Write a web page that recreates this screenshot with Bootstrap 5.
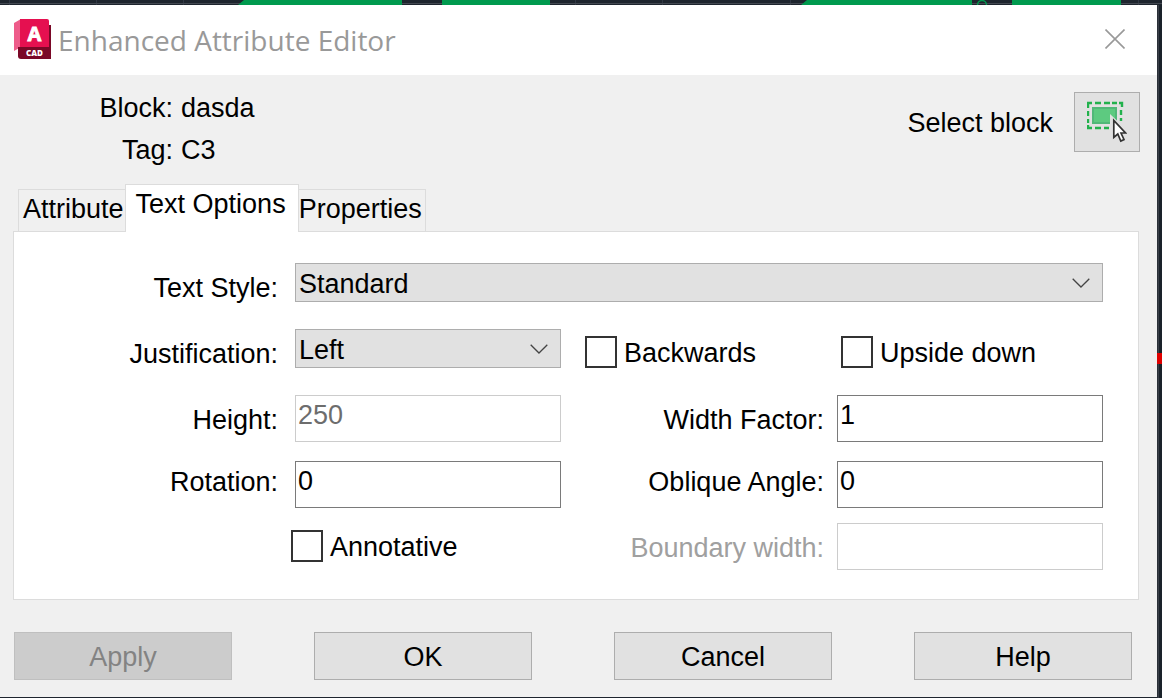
<!DOCTYPE html>
<html lang="en">
<head>
<meta charset="utf-8">
<meta name="viewport" content="width=device-width, initial-scale=1">
<title>Enhanced Attribute Editor</title>
<link href="https://cdn.jsdelivr.net/npm/bootstrap@5.3.0/dist/css/bootstrap.min.css" rel="stylesheet">
<style>
  body { font-family: "Liberation Sans", Arial, sans-serif; font-size: 27px; line-height: 32px; color: #000; background: #1e252e; }
  .canvas-strip { height: 5px; }
  .canvas-edge { flex: none; width: 5px; background: linear-gradient(#e00000, #e00000) 0 51%/100% 11px no-repeat, linear-gradient(90deg, #2a3038 0 1px, #3a3f48 1px 2px, #1a222a 2px); }
  .editor { min-width: 0; background: #f0f0f0; margin-bottom: 1px; }
  .title-row { height: 70px; padding: 0 32px 2px 14px; background: #fff; }
  .title-text { font: 400 28px/40px "Open Sans", "Noto Sans", sans-serif; color: #999; margin: 0 0 0 6px; padding-top: 2px; }
  .plain-btn { border: 0; background: none; padding: 0; line-height: 0; }
  .info-row { padding: 12px 17px 13px 14px; }
  .info-list { display: grid; grid-template-columns: 159px auto; column-gap: 8px; line-height: 42px; margin: 0; }
  .info-list dt, .info-list dd { font-weight: 400; margin: 0; }
  .pick { column-gap: 21px; padding-top: 5px; }
  .pick label { padding-top: 2px; }
  .btn-win { --bs-btn-font-size: 27px; --bs-btn-line-height: 32px; --bs-btn-padding-x: 0; --bs-btn-border-radius: 0; --bs-btn-color: #000; --bs-btn-bg: #e1e1e1; --bs-btn-border-color: #adadad; --bs-btn-hover-bg: #e5f1fb; --bs-btn-hover-border-color: #0078d7; --bs-btn-disabled-color: #838383; --bs-btn-disabled-bg: #ccc; --bs-btn-disabled-border-color: #bfbfbf; --bs-btn-disabled-opacity: 1; }
  .pick-btn { width: 66px; height: 60px; line-height: 0; }
  .editor-tabs { --bs-nav-tabs-border-width: 0; padding-left: 18px; position: relative; z-index: 1; }
  .editor-tabs .nav-link { display: flex; align-items: flex-start; height: 43px; padding: 3px 1px 0 4px; border: 1px solid #dcdcdc; border-radius: 0; color: #000; background: #f0f0f0; margin: 0; }
  .editor-tabs .nav-item:last-child .nav-link { padding: 3px 3px 0 0; border-left: 0; }
  .editor-tabs .nav-link.active { height: 48px; padding: 3px 12px 0 10px; border-color: #dcdcdc; border-bottom: 0; background: #fff; color: #000; margin-left: -1px; }
  .sheet { margin: -1px 18px 0 13px; padding: 31px 35px 29px 0; background: #fff; border: 1px solid #dcdcdc; }
  .sheet-grid { display: grid; grid-template-columns: 281fr 266fr 276fr 266fr; grid-template-rows: 66px 66px 66px 62px auto; align-items: start; }
  .fld-label { text-align: right; padding: 9px 17px 0 0; }
  .fld-label.second { padding-right: 13px; }
  .fld-label.high { padding-top: 5px; }
  .fld-label.off { color: #a0a0a0; }
  .span-rest { grid-column: 2 / -1; }
  .fld { height: 47px; padding: 4px 2px 10px; border: 1px solid #7a7a7a; border-radius: 0; font-size: 27px; line-height: 32px; color: #000; background: #fff; }
  .fld:disabled { border-color: #ccc; background: #fff; color: #6d6d6d; opacity: 1; }
  .drop { height: 39px; padding: 4px 36px 1px 3px; border: 1px solid #adadad; border-radius: 0; font-size: 27px; line-height: 32px; color: #000; background-color: #e1e1e1; background-size: 18px 10px; background-position: right 12px center;
    background-image: url("data:image/svg+xml,%3csvg xmlns='http://www.w3.org/2000/svg' viewBox='0 0 18 10'%3e%3cpath d='M.7.7 9 9 17.3.7' fill='none' stroke='%23444' stroke-width='1.3'/%3e%3c/svg%3e"); }
  .tick { display: flex; align-items: center; column-gap: 7px; padding-top: 6px; }
  .tick .form-check-input { flex: none; width: 32px; height: 32px; margin: 0; border: 2px solid #333; border-radius: 0; }
  .tick label { padding-top: 2px; }
  .tick-b { padding-left: 24px; }
  .tick-u { padding-left: 4px; }
  .tick-a { margin-left: -4px; }
  .actions { padding: 32px 25px 17px 14px; }
  .actions .btn { width: 218px; padding-top: 8px; padding-bottom: 6px; }
</style>
</head>
<body>
<svg class="canvas-strip d-block w-100" viewBox="0 0 1162 5" preserveAspectRatio="none" aria-hidden="true">
  <path d="M9.500 0v5M96.500 0v5M183.500 0v5M575.500 0v5M662.500 0v5M790.500 0v5M1138.500 0v5" stroke="#303743"/>
  <path d="M0 3.500h1162" stroke="#434851"/>
  <path d="M238 5l6-5h158v5zM442 0h108v5H442zM801 5l6-5h165v5zM1012 0h109v5h-109z" fill="#009a4e"/>
  <circle cx="982" cy="5" r="4.500" fill="none" stroke="#009a4e" stroke-width="1.500"/>
</svg>
<div class="d-flex">
  <main class="editor flex-grow-1">
    <header class="title-row d-flex align-items-center">
      <svg width="38" height="40" viewBox="0 0 38 40" role="img" aria-label="AutoCAD">
        <path d="M33 6h4v34h-4z" fill="#7a0827"/>
        <path d="M0 4 7 0v28L0 32z" fill="#ee5c8a"/>
        <path d="M6 0h27q2 0 2 2v26H6z" fill="#e51050"/>
        <path d="M4 28h33v12H7q-3 0-3-3z" fill="#7a0827"/>
        <text x="20.500" y="22" text-anchor="middle" font-family="Open Sans" font-weight="700" font-size="20" fill="#fff" stroke="#fff" stroke-width=".8">A</text>
        <text x="20.500" y="36.500" text-anchor="middle" font-family="Open Sans" font-weight="800" font-size="8" fill="#fff">CAD</text>
      </svg>
      <h1 class="title-text">Enhanced Attribute Editor</h1>
      <button type="button" class="plain-btn ms-auto" aria-label="Close">
        <svg width="20" height="20" viewBox="0 0 20 20"><path d="M.5.5l19 19M19.500.5l-19 19" stroke="#999" stroke-width="1.600"/></svg>
      </button>
    </header>
    <section class="info-row d-flex justify-content-between align-items-start">
      <dl class="info-list">
        <dt class="text-end">Block:</dt><dd>dasda</dd>
        <dt class="text-end">Tag:</dt><dd>C3</dd>
      </dl>
      <div class="pick d-flex align-items-center">
        <label for="pick">Select block</label>
        <button type="button" id="pick" class="btn btn-win pick-btn">
          <svg width="40" height="44" viewBox="0 0 40 44">
            <path d="M1 8V3h4M8 3h6M17 3h6M25 3h5M32 3h3v4M1 11v5M1 19v4M34 10v5M34 18v3M1 25v3h4M8 28h6M17 28h5" fill="none" stroke="#22b14c" stroke-width="2.400"/>
            <path d="M5 7h25v17H5z" fill="#51b878"/>
            <path d="M7 9h21v13H7z" fill="#5dca80"/>
            <path d="M23 14v22l5-2 4 8 7-3-3-9h4z" fill="#e1e1e1"/>
            <path d="M26.800 20.500v17l4-3.500 3 7 3.200-1.500-3-6.500h4.500z" fill="#fff" stroke="#333" stroke-width="1.700"/>
          </svg>
        </button>
      </div>
    </section>
    <ul class="nav nav-tabs editor-tabs align-items-end" role="tablist">
      <li class="nav-item"><button type="button" class="nav-link" role="tab">Attribute</button></li>
      <li class="nav-item"><button type="button" class="nav-link active" role="tab" aria-selected="true">Text Options</button></li>
      <li class="nav-item"><button type="button" class="nav-link" role="tab">Properties</button></li>
    </ul>
    <form class="sheet">
      <div class="sheet-grid">
        <label class="fld-label" for="style">Text Style:</label>
        <select class="form-select drop span-rest" id="style"><option>Standard</option></select>

        <label class="fld-label" for="just">Justification:</label>
        <select class="form-select drop" id="just"><option>Left</option></select>
        <div class="tick tick-b"><input class="form-check-input" type="checkbox" id="back"><label for="back">Backwards</label></div>
        <div class="tick tick-u"><input class="form-check-input" type="checkbox" id="upside"><label for="upside">Upside down</label></div>

        <label class="fld-label" for="height">Height:</label>
        <input class="form-control fld" type="text" id="height" value="250" disabled>
        <label class="fld-label second" for="factor">Width Factor:</label>
        <input class="form-control fld" type="text" id="factor" value="1">

        <label class="fld-label high" for="rotation">Rotation:</label>
        <input class="form-control fld" type="text" id="rotation" value="0">
        <label class="fld-label second high" for="oblique">Oblique Angle:</label>
        <input class="form-control fld" type="text" id="oblique" value="0">

        <span></span>
        <div class="tick tick-a"><input class="form-check-input" type="checkbox" id="anno"><label for="anno">Annotative</label></div>
        <label class="fld-label second off" for="boundary">Boundary width:</label>
        <input class="form-control fld" type="text" id="boundary" disabled>
      </div>
    </form>
    <footer class="actions d-flex justify-content-between">
      <button type="button" class="btn btn-win" disabled>Apply</button>
      <button type="button" class="btn btn-win">OK</button>
      <button type="button" class="btn btn-win">Cancel</button>
      <button type="button" class="btn btn-win">Help</button>
    </footer>
  </main>
  <div class="canvas-edge"></div>
</div>
<script src="https://cdn.jsdelivr.net/npm/bootstrap@5.3.0/dist/js/bootstrap.bundle.min.js"></script>
</body>
</html>
